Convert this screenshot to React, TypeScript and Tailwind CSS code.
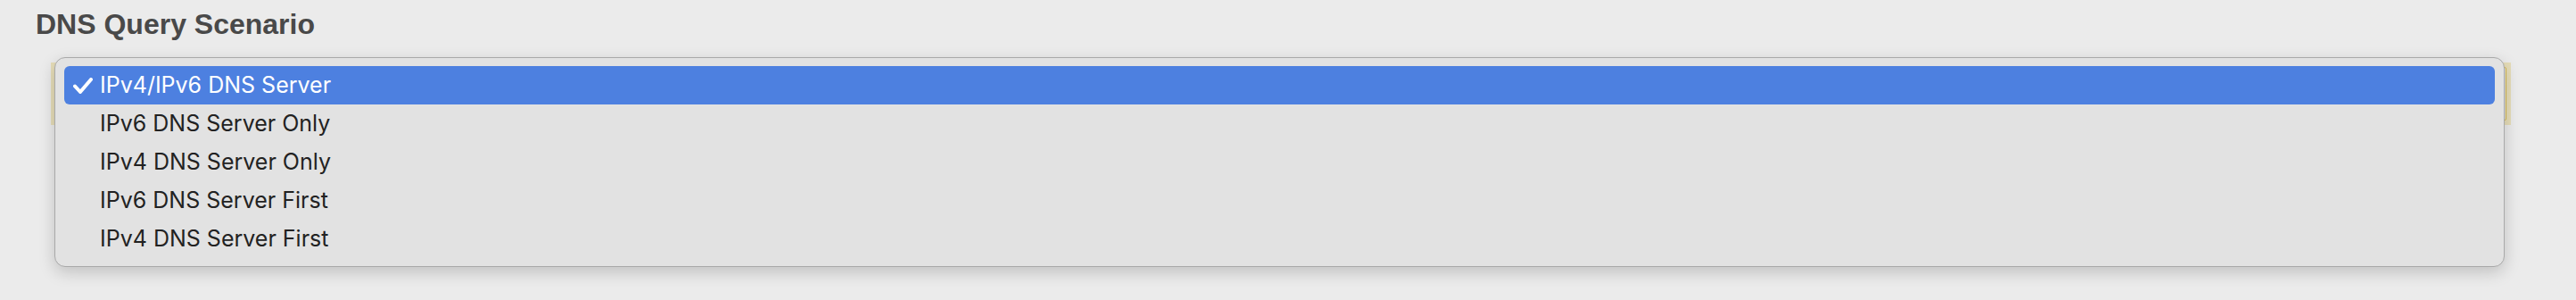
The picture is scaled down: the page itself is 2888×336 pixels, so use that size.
import React from "react";

const options = [
  "IPv4/IPv6 DNS Server",
  "IPv6 DNS Server Only",
  "IPv4 DNS Server Only",
  "IPv6 DNS Server First",
  "IPv4 DNS Server First",
];

export default function App() {
  return (
    <div className="w-[2888px] h-[336px] bg-[#ebebeb] overflow-hidden relative">
      <div className="pt-[15px] pl-[40px]">
        <h1
          className="text-[32px] leading-[25px] font-bold text-[#494949]"
          style={{ fontFamily: '"Liberation Sans", Arial, sans-serif' }}
        >
          DNS Query Scenario
        </h1>
      </div>
      <div className="ml-[57px] mt-[30px] w-[2758px] h-[70px] bg-[#e6ddb8] p-[5px]">
        <div className="w-full h-full border border-[#d6b84a] rounded-[2px] bg-[#e6e6e6]" />
      </div>

      <div
        className="absolute left-[61px] top-[64px] w-[2747px] h-[235px] bg-[#e2e2e2] border border-[#a9a9a9] rounded-[12px] shadow-[0_6px_18px_rgba(0,0,0,0.18)] px-[10px] py-[9px]"
        style={{ fontFamily: 'Inter, "Noto Sans", sans-serif' }}
      >
        {options.map((o, i) => (
          <div
            key={o}
            className={
              "h-[43px] flex items-center rounded-[6px] text-[25px] " +
              (i === 0 ? "bg-[#4d80e0] text-white" : "text-[#222222]")
            }
          >
            <div className="w-[40px] flex justify-end pr-[8px]">
              {i === 0 && (
                <svg width="22" height="18" viewBox="0 0 22 18">
                  <path
                    d="M2 9.5 L8 16 L20 2"
                    fill="none"
                    stroke="white"
                    strokeWidth="4"
                    strokeLinecap="round"
                    strokeLinejoin="round"
                  />
                </svg>
              )}
            </div>
            <span>{o}</span>
          </div>
        ))}
      </div>
    </div>
  );
}
